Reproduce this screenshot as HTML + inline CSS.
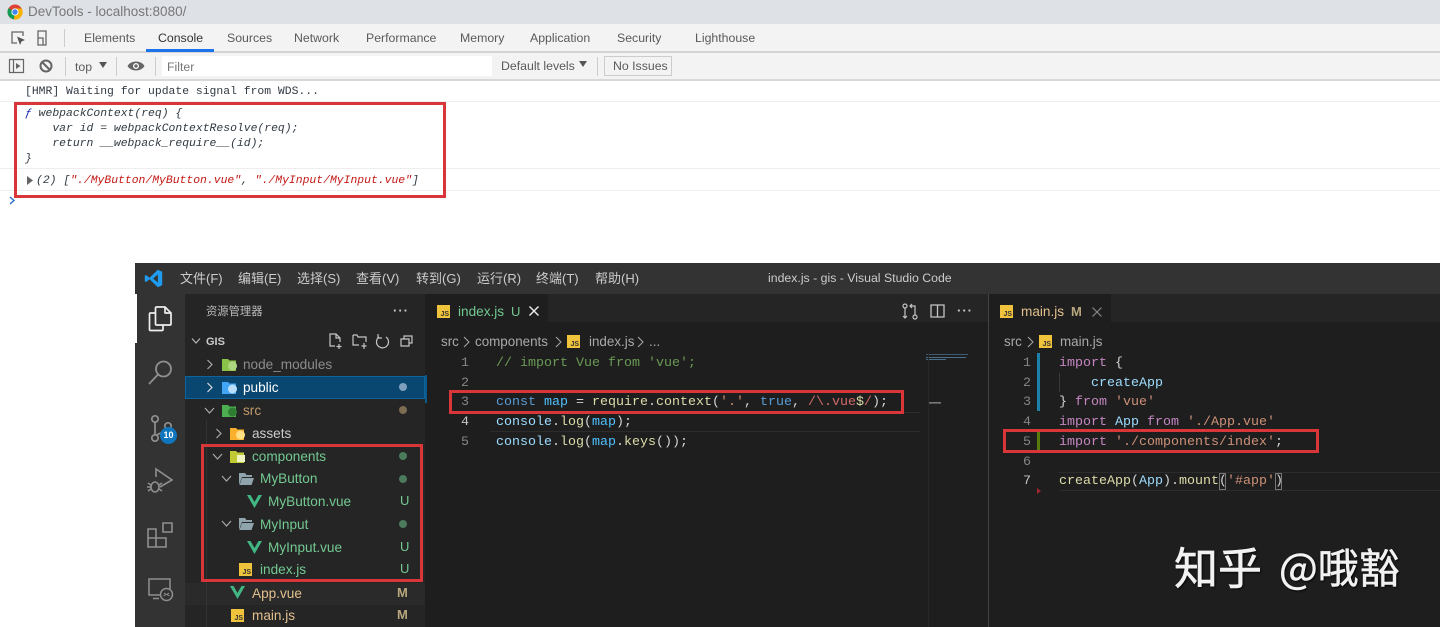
<!DOCTYPE html>
<html><head><meta charset="utf-8">
<style>
html,body{margin:0;padding:0;width:1440px;height:627px;overflow:hidden;background:#fff}
body{position:relative;font-family:"Liberation Sans","Noto Sans CJK SC",sans-serif}
.a,.t,.m,.c,.f{position:absolute;white-space:nowrap}
.a{display:block}
.t{font-size:12.3px;line-height:16px;color:#5a5a5a}
.m{font-family:"Liberation Mono",monospace;font-size:11.4px;line-height:15px;color:#303942;white-space:pre}
.c{font-family:"Liberation Mono",monospace;font-size:13.33px;line-height:20px;color:#d4d4d4}
.f{font-size:13.5px;line-height:20px;color:#ccc}
.n{position:absolute;font-family:"Liberation Mono",monospace;font-size:13.33px;line-height:20px;color:#858585;width:24px;text-align:right}
.d{position:absolute;width:8px;height:8px;border-radius:50%}
.b{position:absolute;border:3px solid #d9363a;box-sizing:border-box}
svg{position:absolute;overflow:visible}
.kw{color:#569cd6}.v{color:#4fc1ff}.fn{color:#dcdcaa}.s{color:#ce9178}.r{color:#d16969}.p{color:#c586c0}.o{color:#9cdcfe}.k{color:#4ec9b0}
.u{position:absolute;font-size:13px;line-height:18px;font-weight:bold}
.js{position:absolute;width:13px;height:13px;background:#f0c33c;color:#333;font:bold 7px/7px "Liberation Sans",sans-serif;text-align:right;padding:0;box-sizing:border-box;padding-top:6px;padding-right:1px}
</style></head><body>

<!-- DevTools -->
<div class="a" style="left:0;top:0;width:1440px;height:24px;background:#dee1e6"></div>
<svg style="left:7px;top:4px" width="16" height="16" viewBox="0 0 16 16"><circle cx="8" cy="8" r="7.5" fill="#db4437"/><path d="M8 8L1.5 4.2A7.5 7.5 0 0 0 7 15.4z" fill="#0f9d58"/><path d="M8 8L7 15.4A7.5 7.5 0 0 0 14.8 4.5H8z" fill="#f4b400"/><circle cx="8" cy="8" r="3.6" fill="#fff"/><circle cx="8" cy="8" r="2.7" fill="#4285f4"/></svg>
<div class="t" style="left:28px;top:4px;font-size:13.5px;color:#777">DevTools - localhost:8080/</div>

<div class="a" style="left:0;top:24px;width:1440px;height:28px;background:#f3f3f3"></div>
<div class="a" style="left:0;top:51px;width:1440px;height:2px;background:#d4d4d4"></div>
<svg style="left:10px;top:30px" width="44" height="18" viewBox="0 0 44 18" fill="none" stroke="#666" stroke-width="1.3"><path d="M7 13H2V2H13V6"/><path d="M7 6.5L15 10L11.5 11.5L10 15z" fill="#555" stroke="none"/><path d="M28 1H36V15H28z"/><path d="M28 8H33V15" /></svg>
<div class="a" style="left:64px;top:29px;width:1px;height:18px;background:#ccc"></div>
<div class="t" style="left:84px;top:30px">Elements</div>
<div class="t" style="left:158px;top:30px;color:#333">Console</div>
<div class="a" style="left:146px;top:49px;width:68px;height:2.5px;background:#1a73e8"></div>
<div class="t" style="left:227px;top:30px">Sources</div>
<div class="t" style="left:294px;top:30px">Network</div>
<div class="t" style="left:366px;top:30px">Performance</div>
<div class="t" style="left:460px;top:30px">Memory</div>
<div class="t" style="left:530px;top:30px">Application</div>
<div class="t" style="left:617px;top:30px">Security</div>
<div class="t" style="left:695px;top:30px">Lighthouse</div>

<div class="a" style="left:0;top:53px;width:1440px;height:27px;background:#f3f3f3"></div>
<div class="a" style="left:0;top:79px;width:1440px;height:2px;background:#d8d8d8"></div>
<svg style="left:8px;top:58px" width="50" height="16" viewBox="0 0 50 16" fill="none" stroke="#666"><path d="M1.5 1.5H15.5V14.5H1.5zM5.5 1.5V14.5" stroke-width="1.2"/><path d="M8 5L12.5 8L8 11z" fill="#666" stroke="none"/><circle cx="38" cy="8" r="5.5" stroke-width="2"/><path d="M34 4L42 12" stroke-width="2"/></svg>
<div class="a" style="left:65px;top:57px;width:1px;height:19px;background:#ccc"></div>
<div class="t" style="left:75px;top:59px">top</div>
<svg style="left:99px;top:62px" width="8" height="7"><path d="M0 0H8L4 6z" fill="#555"/></svg>
<div class="a" style="left:116px;top:57px;width:1px;height:19px;background:#ccc"></div>
<svg style="left:127px;top:60px" width="18" height="12" viewBox="0 0 18 12"><path d="M0.5 6C4 0 14 0 17.5 6C14 12 4 12 0.5 6z" fill="#666"/><circle cx="9" cy="6" r="3" fill="#f3f3f3"/><circle cx="9" cy="6" r="1.6" fill="#666"/></svg>
<div class="a" style="left:155px;top:57px;width:1px;height:19px;background:#ccc"></div>
<div class="a" style="left:162px;top:56px;width:330px;height:20px;background:#fff"></div>
<div class="t" style="left:167px;top:59px;color:#777">Filter</div>
<div class="t" style="left:501px;top:58px">Default levels</div>
<svg style="left:579px;top:61px" width="8" height="7"><path d="M0 0H8L4 6z" fill="#555"/></svg>
<div class="a" style="left:597px;top:57px;width:1px;height:19px;background:#ccc"></div>
<div class="a" style="left:604px;top:56px;width:68px;height:20px;border:1px solid #ccc;box-sizing:border-box"></div>
<div class="t" style="left:613px;top:58px">No Issues</div>

<!-- console -->
<div class="m" style="left:25px;top:85px">[HMR] Waiting for update signal from WDS...</div>
<div class="a" style="left:0;top:101px;width:1440px;height:1px;background:#eee"></div>
<div class="m" style="left:25px;top:107px;font-style:italic"><span style="color:#0d22aa">ƒ</span> webpackContext(req) {</div>
<div class="m" style="left:25px;top:122px;font-style:italic">    var id = webpackContextResolve(req);</div>
<div class="m" style="left:25px;top:137px;font-style:italic">    return __webpack_require__(id);</div>
<div class="m" style="left:25px;top:152px;font-style:italic">}</div>
<div class="a" style="left:0;top:168px;width:1440px;height:1px;background:#eee"></div>
<svg style="left:27px;top:176px" width="7" height="9"><path d="M0 0L6 4.5L0 9z" fill="#666"/></svg>
<div class="m" style="left:36px;top:174px;font-style:italic">(2) [<span style="color:#c41a16">"./MyButton/MyButton.vue"</span>, <span style="color:#c41a16">"./MyInput/MyInput.vue"</span>]</div>
<div class="a" style="left:0;top:190px;width:1440px;height:1px;background:#eee"></div>
<svg style="left:9px;top:196px" width="7" height="9" fill="none"><path d="M1 1L5 4.5L1 8" stroke="#2a6fc9" stroke-width="1.4"/></svg>
<div class="b" style="left:14px;top:102px;width:432px;height:96px"></div>

<!-- VS Code window -->
<div class="a" style="left:135px;top:263px;width:1305px;height:364px;background:#1e1e1e"></div>
<div class="a" style="left:135px;top:263px;width:1305px;height:31px;background:#333"></div>
<svg style="left:144px;top:269px" width="19" height="19" viewBox="0 0 24 24"><path d="M17.5 1L23 3.5V20.5L17.5 23L7 13L2.500 16.500L1 15.500V8.500L2.500 7.500L7 11zM17.500 7L11.500 12L17.500 17z" fill="#1f9cf0"/></svg>
<div class="f" style="left:180px;top:269px;font-size:13px;color:#ccc">文件(F)</div>
<div class="f" style="left:238px;top:269px;font-size:13px;color:#ccc">编辑(E)</div>
<div class="f" style="left:297px;top:269px;font-size:13px;color:#ccc">选择(S)</div>
<div class="f" style="left:356px;top:269px;font-size:13px;color:#ccc">查看(V)</div>
<div class="f" style="left:416px;top:269px;font-size:13px;color:#ccc">转到(G)</div>
<div class="f" style="left:477px;top:269px;font-size:13px;color:#ccc">运行(R)</div>
<div class="f" style="left:536px;top:269px;font-size:13px;color:#ccc">终端(T)</div>
<div class="f" style="left:595px;top:269px;font-size:13px;color:#ccc">帮助(H)</div>
<div class="f" style="left:768px;top:268px;font-size:12.3px;color:#ccc">index.js - gis - Visual Studio Code</div>

<!-- activity bar -->
<div class="a" style="left:135px;top:294px;width:50px;height:333px;background:#333"></div>
<div class="a" style="left:135px;top:294px;width:2px;height:49px;background:#fff"></div>
<svg style="left:148px;top:305px" width="25" height="27" viewBox="0 0 25 27" fill="none" stroke="#eee" stroke-width="1.7" stroke-linejoin="round"><path d="M7.500 8H2.500Q1.500 8 1.500 9V24.500Q1.500 25.500 2.500 25.500H14Q15 25.500 15 24.500V20"/><path d="M8.500 2H17L23 8V19Q23 20 22 20H8.500Q7.500 20 7.500 19V3Q7.500 2 8.500 2z"/><path d="M17 2V8H23"/></svg>
<svg style="left:148px;top:359px" width="26" height="28" viewBox="0 0 26 28" fill="none" stroke="#8f8f8f" stroke-width="1.8"><circle cx="15.500" cy="10" r="7.500"/><path d="M10 15.500L1 25"/></svg>
<svg style="left:150px;top:414px" width="24" height="30" viewBox="0 0 24 30" fill="none" stroke="#8f8f8f" stroke-width="1.7"><circle cx="5" cy="5" r="3.200"/><circle cx="5" cy="24" r="3.200"/><circle cx="18" cy="12" r="3.200"/><path d="M5 8V21M18 15C18 19 8 18 6 22"/></svg>
<div class="a" style="left:160px;top:427px;width:17px;height:17px;border-radius:50%;background:#0f75bd;color:#fff;font:bold 9px/17px 'Liberation Sans',sans-serif;text-align:center">10</div>
<svg style="left:147px;top:467px" width="27" height="28" viewBox="0 0 27 28" fill="none" stroke="#8f8f8f" stroke-width="1.600"><path d="M9 10V2L25 13L13 20"/><ellipse cx="8" cy="20" rx="4" ry="5"/><path d="M1 16L4 18M1 24L4 22M15 16L12 18M15 24L12 22M0 20H4"/></svg>
<svg style="left:147px;top:522px" width="26" height="26" viewBox="0 0 26 26" fill="none" stroke="#8f8f8f" stroke-width="1.600"><path d="M1 7H9V25H1zM1 16H19V25H9"/><path d="M16 1H25V10H16z"/></svg>
<svg style="left:148px;top:578px" width="26" height="24" viewBox="0 0 26 24" fill="none" stroke="#8f8f8f" stroke-width="1.500"><path d="M12 17H1V1H22V11"/><path d="M5 20.500H11"/><circle cx="18.500" cy="16.500" r="6"/><path d="M16 15L18 16.500L15.500 18M21 15L19 16.500L21.500 18" stroke-width="1"/></svg>

<!-- sidebar -->
<div class="a" style="left:185px;top:294px;width:240px;height:333px;background:#252526"></div>
<div class="f" style="left:206px;top:302px;font-size:11.300px;color:#bbb">资源管理器</div>
<div class="f" style="left:393px;top:301px;font-size:13px;font-weight:bold;color:#ccc;letter-spacing:1px">···</div>
<svg style="left:191px;top:337px" width="10" height="8" fill="none"><path d="M1 1.500L5 6L9 1.500" stroke="#bbb" stroke-width="1.100"/></svg>
<div class="f" style="left:206px;top:332px;font-size:11px;font-weight:bold;color:#ccc">GIS</div>
<svg style="left:328px;top:333px" width="92" height="17" viewBox="0 0 92 17" fill="none" stroke="#c5c5c5" stroke-width="1.200"><path d="M7 13H2V1H8L12 5V9M8 1V5H12M11 11V16M8.500 13.500H13.500"/><path d="M25 2H29L30 4H38V9M31 12H25V2M36 10V16M33.500 13H38.500"/><path d="M51 4A6 6 0 1 0 58 4M50 1V5H54" /><path d="M73 6H81V13H73zM76 6V3H84V10H81"/></svg>

<div class="a" style="left:185px;top:376px;width:240px;height:23px;background:#094771;outline:1px solid #0e639c;outline-offset:-1px"></div>

<svg style="left:206px;top:359px" width="8" height="11" fill="none"><path d="M1.500 1L6 5.500L1.500 10" stroke="#aaa" stroke-width="1.200"/></svg>
<svg style="left:222px;top:358px" width="16" height="13" viewBox="0 0 16 13"><path d="M0 1H6L7.500 2.500H14V13H0z" fill="#8bc34a"/><circle cx="10.500" cy="8" r="4.500" fill="#aed581"/></svg>
<div class="f" style="left:243px;top:355px;color:#8c8c8c;font-size:13.600px">node_modules</div>

<svg style="left:206px;top:382px" width="8" height="11" fill="none"><path d="M1.500 1L6 5.500L1.500 10" stroke="#ddd" stroke-width="1.200"/></svg>
<svg style="left:222px;top:381px" width="16" height="13" viewBox="0 0 16 13"><path d="M0 1H6L7.500 2.500H14V13H0z" fill="#42a5f5"/><circle cx="10.500" cy="8" r="4.500" fill="#bbdefb"/></svg>
<div class="f" style="left:243px;top:378px;color:#fff;font-size:13.600px">public</div>
<div class="d" style="left:399px;top:383px;background:#7f9fbf"></div>

<svg style="left:204px;top:407px" width="11" height="8" fill="none"><path d="M1 1L5.500 6L10 1" stroke="#aaa" stroke-width="1.200"/></svg>
<svg style="left:222px;top:404px" width="16" height="13" viewBox="0 0 16 13"><path d="M0 1H6L7.500 2.500H14V13H0z" fill="#4caf50"/><circle cx="10.500" cy="8" r="4.500" fill="#2e7d32"/></svg>
<div class="f" style="left:243px;top:401px;color:#c09a6b;font-size:13.600px">src</div>
<div class="d" style="left:399px;top:406px;background:#7d6b52"></div>

<svg style="left:215px;top:428px" width="8" height="11" fill="none"><path d="M1.500 1L6 5.500L1.500 10" stroke="#aaa" stroke-width="1.200"/></svg>
<svg style="left:230px;top:427px" width="16" height="13" viewBox="0 0 16 13"><path d="M0 1H6L7.500 2.500H14V13H0z" fill="#fbb02d"/><circle cx="10.500" cy="8" r="4.500" fill="#ffe082"/></svg>
<div class="f" style="left:252px;top:424px;color:#ccc;font-size:13.600px">assets</div>

<svg style="left:212px;top:453px" width="11" height="8" fill="none"><path d="M1 1L5.500 6L10 1" stroke="#aaa" stroke-width="1.200"/></svg>
<svg style="left:230px;top:450px" width="16" height="13" viewBox="0 0 16 13"><path d="M0 1H6L7.500 2.500H14V13H0z" fill="#c0ca33"/><rect x="7" y="5" width="8" height="7" fill="#f0f4c3"/></svg>
<div class="f" style="left:252px;top:447px;color:#73c991;font-size:13.600px">components</div>
<div class="d" style="left:399px;top:452px;background:#4c7a5c"></div>

<svg style="left:221px;top:475px" width="11" height="8" fill="none"><path d="M1 1L5.500 6L10 1" stroke="#aaa" stroke-width="1.200"/></svg>
<svg style="left:239px;top:473px" width="15" height="12" viewBox="0 0 15 12"><path d="M0 0H6L7.500 2H13V4H3L0 12z" fill="#90a4ae"/><path d="M3 5H15L12.500 12H0.500z" fill="#90a4ae"/></svg>
<div class="f" style="left:260px;top:469px;color:#73c991;font-size:13.600px">MyButton</div>
<div class="d" style="left:399px;top:475px;background:#4c7a5c"></div>

<svg style="left:247px;top:495px" width="15" height="13" viewBox="0 0 15 13"><path d="M0 0H3.500L7.500 7L11.500 0H15L7.500 13z" fill="#41b883"/></svg>
<div class="f" style="left:268px;top:492px;color:#73c991;font-size:13.600px">MyButton.vue</div>
<div class="u" style="left:400px;top:492px;color:#73c991;font-weight:normal">U</div>

<svg style="left:221px;top:520px" width="11" height="8" fill="none"><path d="M1 1L5.500 6L10 1" stroke="#aaa" stroke-width="1.200"/></svg>
<svg style="left:239px;top:518px" width="15" height="12" viewBox="0 0 15 12"><path d="M0 0H6L7.500 2H13V4H3L0 12z" fill="#90a4ae"/><path d="M3 5H15L12.500 12H0.500z" fill="#90a4ae"/></svg>
<div class="f" style="left:260px;top:515px;color:#73c991;font-size:13.600px">MyInput</div>
<div class="d" style="left:399px;top:520px;background:#4c7a5c"></div>

<svg style="left:247px;top:541px" width="15" height="13" viewBox="0 0 15 13"><path d="M0 0H3.500L7.500 7L11.500 0H15L7.500 13z" fill="#41b883"/></svg>
<div class="f" style="left:268px;top:538px;color:#73c991;font-size:13.600px">MyInput.vue</div>
<div class="u" style="left:400px;top:538px;color:#73c991;font-weight:normal">U</div>

<div class="js" style="left:239px;top:563px">JS</div>
<div class="f" style="left:260px;top:560px;color:#73c991;font-size:13.600px">index.js</div>
<div class="u" style="left:400px;top:560px;color:#73c991;font-weight:normal">U</div>

<div class="a" style="left:185px;top:583px;width:240px;height:22px;background:#2a2a2b"></div>
<svg style="left:230px;top:586px" width="15" height="13" viewBox="0 0 15 13"><path d="M0 0H3.500L7.500 7L11.500 0H15L7.500 13z" fill="#41b883"/></svg>
<div class="f" style="left:252px;top:584px;color:#e2c08d;font-size:13.600px">App.vue</div>
<div class="u" style="left:397px;top:584px;color:#b8a77e">M</div>

<div class="js" style="left:231px;top:609px">JS</div>
<div class="f" style="left:252px;top:606px;color:#e2c08d;font-size:13.600px">main.js</div>
<div class="u" style="left:397px;top:606px;color:#b8a77e">M</div>

<div class="a" style="left:206px;top:420px;width:1px;height:207px;background:#333"></div>
<div class="b" style="left:201px;top:444px;width:222px;height:138px"></div>

<!-- left editor -->
<div class="a" style="left:425px;top:294px;width:563px;height:28px;background:#252526"></div>
<div class="a" style="left:425px;top:294px;width:123px;height:34px;background:#1e1e1e"></div>
<div class="js" style="left:437px;top:305px">JS</div>
<div class="f" style="left:458px;top:302px;color:#73c991;font-size:13.600px">index.js</div>
<div class="f" style="left:511px;top:302px;color:#73c991;font-size:13px">U</div>
<svg style="left:529px;top:306px" width="10" height="10" fill="none"><path d="M0.500 0.500L9.500 9.500M9.500 0.500L0.500 9.500" stroke="#eee" stroke-width="1.400"/></svg>
<svg style="left:902px;top:303px" width="16" height="17" viewBox="0 0 16 17" fill="none" stroke="#c5c5c5" stroke-width="1.200"><circle cx="3" cy="3" r="2"/><circle cx="13" cy="14" r="2"/><path d="M3 5V15M13 12V3H8M10 1L8 3L10 5M1 13L3 15L5 13"/></svg>
<svg style="left:930px;top:304px" width="15" height="14" fill="none" stroke="#c5c5c5" stroke-width="1.300"><path d="M1 1H14V13H1zM7.500 1V13"/></svg>
<div class="f" style="left:957px;top:301px;font-size:13px;font-weight:bold;color:#ccc;letter-spacing:1px">···</div>

<div class="f" style="left:441px;top:332px;color:#a9a9a9;font-size:13.400px">src</div>
<svg style="left:463px;top:336px" width="7" height="12" fill="none"><path d="M1 1L6 6L1 11" stroke="#a9a9a9"/></svg>
<div class="f" style="left:475px;top:332px;color:#a9a9a9;font-size:13.400px">components</div>
<svg style="left:555px;top:336px" width="7" height="12" fill="none"><path d="M1 1L6 6L1 11" stroke="#a9a9a9"/></svg>
<div class="js" style="left:567px;top:335px">JS</div>
<div class="f" style="left:589px;top:332px;color:#a9a9a9;font-size:13.400px">index.js</div>
<svg style="left:637px;top:336px" width="7" height="12" fill="none"><path d="M1 1L6 6L1 11" stroke="#a9a9a9"/></svg>
<div class="f" style="left:649px;top:332px;color:#a9a9a9;font-size:13.400px">...</div>

<div class="n" style="left:445px;top:354px">1</div>
<div class="n" style="left:445px;top:374px">2</div>
<div class="n" style="left:445px;top:393px">3</div>
<div class="n" style="left:445px;top:413px;color:#c6c6c6">4</div>
<div class="n" style="left:445px;top:433px">5</div>
<div class="c" style="left:496px;top:354px;color:#6a9955">// import Vue from 'vue';</div>
<div class="a" style="left:490px;top:412px;width:430px;height:1px;background:#2c2c2c"></div>
<div class="a" style="left:490px;top:431px;width:430px;height:1px;background:#2c2c2c"></div>
<div class="c" style="left:496px;top:393px"><span class="kw">const</span> <span class="v">map</span> = <span class="fn">require</span>.<span class="fn">context</span>(<span class="s">'.'</span>, <span class="kw">true</span>, <span class="r">/\.vue</span><span style="color:#dcdcaa">$</span><span class="r">/</span>);</div>
<div class="c" style="left:496px;top:413px"><span class="o">console</span>.<span class="fn">log</span>(<span class="v">map</span>);</div>
<div class="c" style="left:496px;top:433px"><span class="o">console</span>.<span class="fn">log</span>(<span class="v">map</span>.<span class="fn">keys</span>());</div>
<div class="b" style="left:449px;top:390px;width:455px;height:24px"></div>

<div class="a" style="left:926px;top:354px;width:42px;height:1px;background:#3c5a70"></div>
<div class="a" style="left:926px;top:357px;width:40px;height:1px;background:#4a6f8a"></div>
<div class="a" style="left:926px;top:359px;width:20px;height:1px;background:#4a6f8a"></div>
<div class="a" style="left:928px;top:402px;width:13px;height:1px;background:#777"></div>
<div class="a" style="left:928px;top:403px;width:13px;height:1px;background:#555"></div>
<div class="a" style="left:928px;top:353px;width:1px;height:274px;background:#272727"></div>
<div class="a" style="left:425px;top:375px;width:2px;height:28px;background:#0c5a8a"></div>

<!-- divider -->
<div class="a" style="left:988px;top:294px;width:1px;height:333px;background:#444"></div>

<!-- right editor -->
<div class="a" style="left:989px;top:294px;width:451px;height:28px;background:#252526"></div>
<div class="a" style="left:989px;top:294px;width:122px;height:34px;background:#1e1e1e"></div>
<div class="js" style="left:1000px;top:305px">JS</div>
<div class="f" style="left:1021px;top:302px;color:#e2c08d;font-size:13.600px">main.js</div>
<div class="f" style="left:1071px;top:302px;color:#b8a77e;font-size:13px;font-weight:bold">M</div>
<svg style="left:1092px;top:307px" width="10" height="10" fill="none"><path d="M0.500 0.500L9.500 9.500M9.500 0.500L0.500 9.500" stroke="#888" stroke-width="1.200"/></svg>
<div class="f" style="left:1004px;top:332px;color:#a9a9a9;font-size:13.400px">src</div>
<svg style="left:1027px;top:336px" width="7" height="12" fill="none"><path d="M1 1L6 6L1 11" stroke="#a9a9a9"/></svg>
<div class="js" style="left:1039px;top:335px">JS</div>
<div class="f" style="left:1060px;top:332px;color:#a9a9a9;font-size:13.400px">main.js</div>

<div class="n" style="left:1007px;top:354px">1</div>
<div class="n" style="left:1007px;top:374px">2</div>
<div class="n" style="left:1007px;top:393px">3</div>
<div class="n" style="left:1007px;top:413px">4</div>
<div class="n" style="left:1007px;top:433px">5</div>
<div class="n" style="left:1007px;top:453px">6</div>
<div class="n" style="left:1007px;top:472px;color:#c6c6c6">7</div>
<div class="a" style="left:1037px;top:353px;width:3px;height:58px;background:#1b81a8"></div>
<div class="a" style="left:1037px;top:432px;width:3px;height:19px;background:#587c0c"></div>
<div class="a" style="left:1059px;top:373px;width:1px;height:19px;background:#3a3a3a"></div>
<svg style="left:1037px;top:488px" width="5" height="6"><path d="M0 0L4 3L0 6z" fill="#a1262d"/></svg>
<div class="c" style="left:1059px;top:354px"><span class="p">import</span> {</div>
<div class="c" style="left:1091px;top:374px"><span class="o">createApp</span></div>
<div class="c" style="left:1059px;top:393px">} <span class="p">from</span> <span class="s">'vue'</span></div>
<div class="c" style="left:1059px;top:413px"><span class="p">import</span> <span class="o">App</span> <span class="p">from</span> <span class="s">'./App.vue'</span></div>
<div class="c" style="left:1059px;top:433px"><span class="p">import</span> <span class="s">'./components/index'</span>;</div>
<div class="a" style="left:1059px;top:472px;width:381px;height:1px;background:#2c2c2c"></div>
<div class="a" style="left:1059px;top:490px;width:381px;height:1px;background:#2c2c2c"></div>
<div class="a" style="left:1219px;top:473px;width:7px;height:17px;border:1px solid #777;box-sizing:border-box"></div>
<div class="a" style="left:1275px;top:473px;width:7px;height:17px;border:1px solid #777;box-sizing:border-box"></div>
<div class="c" style="left:1059px;top:472px"><span class="fn">createApp</span>(<span class="o">App</span>).<span class="fn">mount</span>(<span class="s">'#app'</span>)</div>
<div class="b" style="left:1003px;top:429px;width:316px;height:24px"></div>

<!-- watermark -->
<div class="f" style="left:1174px;top:539px;font-size:44px;line-height:52px;color:#f2f2f2;-webkit-text-stroke:0.6px #f2f2f2;text-shadow:1px 1px 2px #000;font-family:'Noto Sans CJK SC',sans-serif">知乎</div>
<div class="f" style="left:1279px;top:539px;font-size:41px;line-height:52px;color:#f2f2f2;-webkit-text-stroke:0.5px #f2f2f2;text-shadow:1px 1px 2px #000;font-family:'Noto Sans CJK SC',sans-serif">@哦豁</div>
</body></html>
